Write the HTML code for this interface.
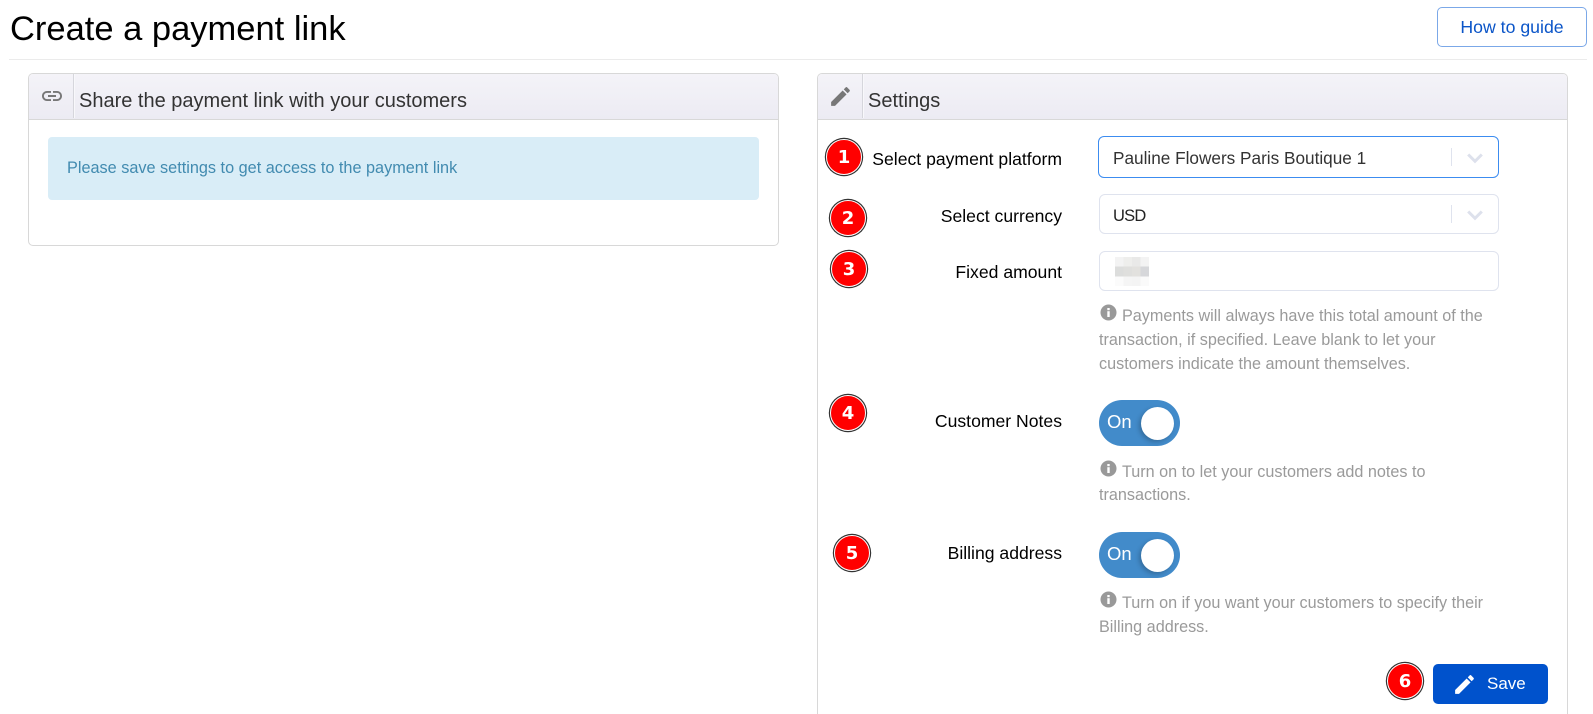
<!DOCTYPE html>
<html><head><meta charset="utf-8"><style>
html,body{margin:0;padding:0;background:#fff;width:1593px;height:714px;overflow:hidden}
body{position:relative;font-family:"Liberation Sans",sans-serif}
.a{position:absolute;box-sizing:border-box}
.t{position:absolute;white-space:nowrap}
.lbl{right:531px;font-size:17.6px;line-height:24px;color:#000}
.hint{left:1099px;font-size:16.200px;line-height:24px;color:#9a9a9a}
.panel{border:1px solid #d8d8d8;border-radius:5px;background:#fff}
.hd{left:0;top:0;right:0;height:45px;position:absolute;background:linear-gradient(#f4f3f8,#ecebf3);border-bottom:1px solid #d8d8d8;border-radius:4px 4px 0 0}
.sep{position:absolute;top:0;width:1px;height:44px;background:#d6d6dc;border-right:1px solid #f8f8fb}
.bd{width:36px;height:36px;border-radius:50%;background:#f00;border:1px solid #fff;box-shadow:0 0 0 1.200px #333;color:#fff;font-weight:bold;font-family:"DejaVu Sans",sans-serif;font-size:18px;line-height:36px;text-align:center}
.sel{background:#fff;border:1px solid #dfe3ee;border-radius:6px;left:1099px;width:400px;height:40px}
.tog{left:1099px;width:81px;height:46px;border-radius:23px;background:#428bca}
.tog i{position:absolute;left:42px;top:7px;width:33px;height:33px;border-radius:50%;background:#fff;box-shadow:-2px 2px 5px rgba(0,0,0,.22)}
.tog b{position:absolute;left:8px;top:9px;font-weight:normal;font-size:18.5px;line-height:26px;color:#fff}
</style></head><body>
<div class="t" style="left:10px;top:8px;font-size:34.5px;line-height:42px;color:#000">Create a payment link</div>
<div class="a" style="left:1437px;top:7px;width:150px;height:40px;border:1px solid #7ba8e8;border-radius:5px;color:#0b55c8;font-size:17.700px;line-height:39px;text-align:center">How to guide</div>
<div class="a" style="left:9px;top:59px;width:1578px;height:1px;background:#ebebeb"></div>

<div class="a panel" style="left:28px;top:73px;width:751px;height:173px">
 <div class="hd"><div class="sep" style="left:44px"></div></div>
 <svg class="a" style="left:11px;top:10px" width="24" height="24" viewBox="0 0 24 24"><path fill="#777" d="M3.900 12c0-1.700 1.400-3.100 3.100-3.100h4V7H7c-2.800 0-5 2.200-5 5s2.200 5 5 5h4v-1.900H7c-1.700 0-3.100-1.400-3.100-3.100zM8 13h8v-2H8v2zm9-6h-4v1.900h4c1.700 0 3.100 1.400 3.100 3.100s-1.400 3.100-3.100 3.100h-4V17h4c2.800 0 5-2.200 5-5s-2.200-5-5-5z"/></svg>
 <div class="t" style="left:50px;top:14px;font-size:20px;line-height:26px;color:#333">Share the payment link with your customers</div>
 <div class="a" style="left:19px;top:63px;width:711px;height:63px;background:#d9edf7;border-radius:4px"></div>
 <div class="t" style="left:38px;top:82px;font-size:16.260px;line-height:24px;color:#428bb0">Please save settings to get access to the payment link</div>
</div>

<div class="a panel" style="left:817px;top:73px;width:751px;height:650px">
 <div class="hd"><div class="sep" style="left:44px"></div></div>
 <svg class="a" style="left:10px;top:10px" width="25" height="25" viewBox="0 0 24 24"><path fill="#777" d="M3 17.250V21h3.750L17.810 9.940l-3.750-3.750L3 17.250zM20.710 7.040a1 1 0 0 0 0-1.410l-2.340-2.340a1 1 0 0 0-1.410 0l-1.830 1.830 3.750 3.750 1.830-1.830z"/></svg>
 <div class="t" style="left:50px;top:14px;font-size:20px;line-height:26px;color:#333">Settings</div>
</div>

<div class="a bd" style="left:826px;top:139px">1</div>
<div class="t lbl" style="top:147px">Select payment platform</div>
<div class="a sel" style="top:136px;left:1098px;width:401px;height:42px;border:1.500px solid #3c8cf0"></div>
<div class="t" style="left:1113px;top:146px;font-size:17.200px;line-height:24px;color:#333">Pauline Flowers Paris Boutique 1</div>
<div class="a" style="left:1451px;top:148px;width:1px;height:18px;background:#dfe3ee"></div>
<svg class="a" style="left:1467px;top:153px" width="16" height="11" viewBox="0 0 16 11"><path d="M1.200 1.500 8 8.300l6.800-6.800" fill="none" stroke="#dde1ec" stroke-width="3"/></svg>

<div class="a bd" style="left:830px;top:200px">2</div>
<div class="t lbl" style="top:204px">Select currency</div>
<div class="a sel" style="top:194px"></div>
<div class="t" style="left:1113px;top:204px;font-size:16.500px;line-height:24px;color:#222;letter-spacing:-.8px">USD</div>
<div class="a" style="left:1451px;top:205px;width:1px;height:18px;background:#dfe3ee"></div>
<svg class="a" style="left:1467px;top:210px" width="16" height="11" viewBox="0 0 16 11"><path d="M1.200 1.500 8 8.300l6.800-6.800" fill="none" stroke="#dde1ec" stroke-width="3"/></svg>

<div class="a bd" style="left:831px;top:251px">3</div>
<div class="t lbl" style="top:260px">Fixed amount</div>
<div class="a sel" style="top:251px"></div>
<svg class="a" style="left:1115px;top:257px" width="34" height="29" viewBox="0 0 4 3" preserveAspectRatio="none" shape-rendering="crispEdges">
<rect x="0" y="0" width="1" height="1" fill="#f3f3f3"/><rect x="1" y="0" width="1" height="1" fill="#eeeeec"/><rect x="2" y="0" width="1" height="1" fill="#e9e9e8"/><rect x="3" y="0" width="1" height="1" fill="#f3f3f3"/>
<rect x="0" y="1" width="1" height="1" fill="#dcdddc"/><rect x="1" y="1" width="1" height="1" fill="#dfdfdd"/><rect x="2" y="1" width="1" height="1" fill="#e2e1de"/><rect x="3" y="1" width="1" height="1" fill="#d6d7da"/>
<rect x="0" y="2" width="1" height="1" fill="#fbfbfb"/><rect x="1" y="2" width="1" height="1" fill="#f5f5f5"/><rect x="2" y="2" width="1" height="1" fill="#f4f4f4"/><rect x="3" y="2" width="1" height="1" fill="#fafafa"/>
</svg>

<svg class="a" style="left:1100px;top:304px" width="17" height="17" viewBox="0 0 17 17"><circle cx="8.500" cy="8.500" r="8" fill="#999"/><rect x="7.300" y="7.200" width="2.400" height="5.800" fill="#fff"/><rect x="7.300" y="4" width="2.400" height="2.200" fill="#fff"/></svg>
<div class="t hint" style="left:1122px;top:304px">Payments will always have this total amount of the</div>
<div class="t hint" style="top:328px">transaction, if specified. Leave blank to let your</div>
<div class="t hint" style="top:352px">customers indicate the amount themselves.</div>

<div class="a bd" style="left:830px;top:395px">4</div>
<div class="t lbl" style="top:409px">Customer Notes</div>
<div class="a tog" style="top:400px"><b>On</b><i></i></div>
<svg class="a" style="left:1100px;top:460px" width="17" height="17" viewBox="0 0 17 17"><circle cx="8.500" cy="8.500" r="8" fill="#999"/><rect x="7.300" y="7.200" width="2.400" height="5.800" fill="#fff"/><rect x="7.300" y="4" width="2.400" height="2.200" fill="#fff"/></svg>
<div class="t hint" style="left:1122px;top:460px">Turn on to let your customers add notes to</div>
<div class="t hint" style="top:483px">transactions.</div>

<div class="a bd" style="left:834px;top:535px">5</div>
<div class="t lbl" style="top:541px">Billing address</div>
<div class="a tog" style="top:532px"><b>On</b><i></i></div>
<svg class="a" style="left:1100px;top:591px" width="17" height="17" viewBox="0 0 17 17"><circle cx="8.500" cy="8.500" r="8" fill="#999"/><rect x="7.300" y="7.200" width="2.400" height="5.800" fill="#fff"/><rect x="7.300" y="4" width="2.400" height="2.200" fill="#fff"/></svg>
<div class="t hint" style="left:1122px;top:591px">Turn on if you want your customers to specify their</div>
<div class="t hint" style="top:615px">Billing address.</div>

<div class="a bd" style="left:1387px;top:663px">6</div>
<div class="a" style="left:1433px;top:664px;width:115px;height:40px;background:#0052cc;border-radius:5px"></div>
<svg class="a" style="left:1452px;top:672px" width="25" height="25" viewBox="0 0 24 24"><path fill="#fff" d="M3 17.250V21h3.750L17.810 9.940l-3.750-3.750L3 17.250zM20.710 7.040a1 1 0 0 0 0-1.410l-2.340-2.340a1 1 0 0 0-1.410 0l-1.830 1.830 3.750 3.750 1.830-1.830z"/></svg>
<div class="t" style="left:1487px;top:672px;font-size:17px;line-height:24px;color:#fff">Save</div>
</body></html>
